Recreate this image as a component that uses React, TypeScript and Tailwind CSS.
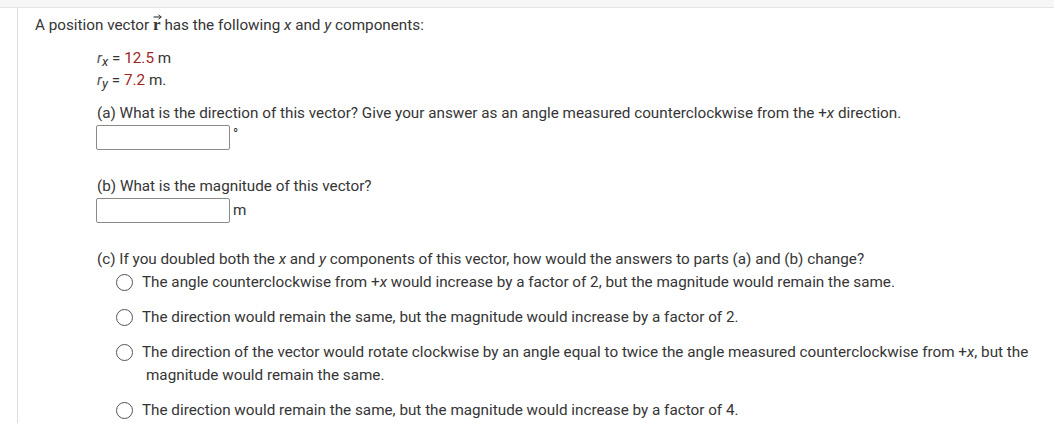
import React from "react";

function Radio() {
  return (
    <span className="block w-[17px] h-[17px] rounded-full border-[1.5px] border-[#555] bg-white" />
  );
}

function Opt({ children, wrap }: { children: React.ReactNode; wrap?: boolean }) {
  return (
    <div className="flex items-start pl-[116px]">
      <div className="pt-[3px] shrink-0">
        <Radio />
      </div>
      <div className={"ml-[9px] leading-[23px] pr-[14px] " + (wrap ? "pl-[4px] -indent-[4px]" : "")}>{children}</div>
    </div>
  );
}

export default function App() {
  const red = "text-[#a3241c]";
  return (
    <div className="w-[1054px] h-[423px] overflow-hidden bg-white text-[#353535] text-[15.25px]" style={{ fontFamily: "Roboto, 'Liberation Sans', sans-serif" }}>
      <div className="h-[8px] bg-[#f6f6f6] border-b border-[#e4e4e4]" />
      <div className="ml-[17px] border-l border-[#dedede] h-full pl-[17px] pt-[6px]">
        <div className="leading-[22px]">
          A position vector{" "}
          <span className="relative inline-block font-bold" style={{ fontFamily: "'Liberation Serif', serif", fontSize: "17px" }}>
            r
            <svg className="absolute left-[0px] top-[0px]" width="9" height="6" viewBox="0 0 9 6">
              <path d="M0.5 3 H8" stroke="#333" strokeWidth="1.1" />
              <path d="M5.5 0.8 L8.3 3 L5.5 5.2" stroke="#333" strokeWidth="1" fill="none" />
            </svg>
          </span>{" "}
          has the following <i>x</i> and <i>y</i> components:
        </div>
        <div className="pl-[62px] mt-[11px] leading-[22px]">
          <div>
            <i className="text-[#555]">r</i>
            <sub className="text-[13px] italic">x</sub> = <span className={red}>12.5</span> m
          </div>
          <div>
            <i className="text-[#555]">r</i>
            <sub className="text-[13px] italic">y</sub> = <span className={red}>7.2</span> m.
          </div>
        </div>
        <div className="pl-[62px] mt-[11px] leading-[22px]">(a) What is the direction of this vector? Give your answer as an angle measured counterclockwise from the +<i>x</i> direction.</div>
        <div className="pl-[61px] mt-[1px] flex items-start">
          <div className="w-[134px] h-[25px] border border-[#8a8a8a] rounded-[2px]" />
          <span className="ml-[3px] text-[14px] leading-[16px] mt-[1px]">°</span>
        </div>
        <div className="pl-[62px] mt-[25px] leading-[22px]">(b) What is the magnitude of this vector?</div>
        <div className="pl-[61px] mt-[1px] flex items-center">
          <div className="w-[134px] h-[25px] border border-[#8a8a8a] rounded-[2px]" />
          <span className="ml-[3px]">m</span>
        </div>
        <div className="pl-[62px] mt-[25px] leading-[22px]">(c) If you doubled both the <i>x</i> and <i>y</i> components of this vector, how would the answers to parts (a) and (b) change?</div>
        <div className="-ml-[35px] mt-[1px] flex flex-col gap-[12px]">
          <Opt>The angle counterclockwise from +<i>x</i> would increase by a factor of 2, but the magnitude would remain the same.</Opt>
          <Opt>The direction would remain the same, but the magnitude would increase by a factor of 2.</Opt>
          <Opt wrap>The direction of the vector would rotate clockwise by an angle equal to twice the angle measured counterclockwise from +<i>x</i>, but the magnitude would remain the same.</Opt>
          <Opt>The direction would remain the same, but the magnitude would increase by a factor of 4.</Opt>
        </div>
      </div>
    </div>
  );
}
